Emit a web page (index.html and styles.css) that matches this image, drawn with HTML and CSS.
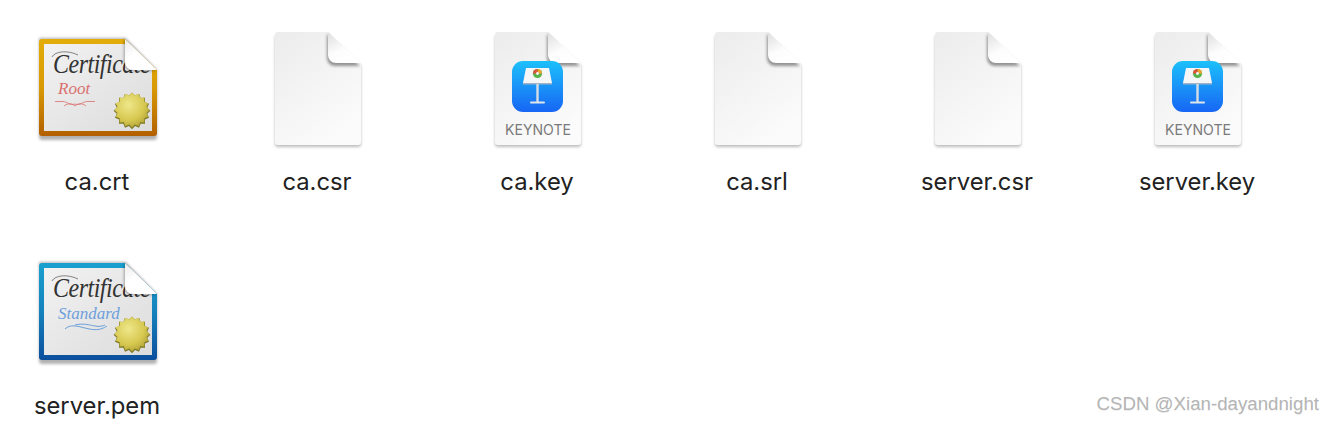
FILE: index.html
```html
<!DOCTYPE html>
<html lang="en">
<head>
<meta charset="utf-8">
<title>Certificates</title>
<link rel="stylesheet" href="styles.css">
</head>
<body>
<svg class="defs" aria-hidden="true">
  <defs>
    <linearGradient id="gold" x1="0" y1="0" x2="0" y2="1"><stop offset="0" stop-color="#e3ad0a"/><stop offset="0.5" stop-color="#d99a05"/><stop offset="1" stop-color="#b35f00"/></linearGradient>
    <linearGradient id="blue" x1="0" y1="0" x2="0" y2="1"><stop offset="0" stop-color="#1aa0cf"/><stop offset="0.5" stop-color="#1582bd"/><stop offset="1" stop-color="#0b4f9c"/></linearGradient>
    <linearGradient id="sheet" x1="0" y1="0" x2="1" y2="1"><stop offset="0" stop-color="#f2f2f2"/><stop offset="1" stop-color="#dcdcdc"/></linearGradient>
    <linearGradient id="page" x1="0" y1="0" x2="0.6" y2="1"><stop offset="0" stop-color="#ececec"/><stop offset="1" stop-color="#fbfbfb"/></linearGradient>
    <linearGradient id="fold" x1="0" y1="0" x2="0.6" y2="1"><stop offset="0" stop-color="#dedede"/><stop offset="0.6" stop-color="#fdfdfd"/><stop offset="1" stop-color="#ffffff"/></linearGradient>
    <linearGradient id="fold-cert" x1="0" y1="0" x2="0.6" y2="1"><stop offset="0" stop-color="#ebebeb"/><stop offset="0.5" stop-color="#ffffff"/><stop offset="1" stop-color="#ffffff"/></linearGradient>
    <linearGradient id="app" x1="0" y1="0" x2="0" y2="1"><stop offset="0" stop-color="#1cc0fb"/><stop offset="1" stop-color="#1766f4"/></linearGradient>
    <radialGradient id="seal" cx="0.4" cy="0.35" r="0.75"><stop offset="0" stop-color="#efe78a"/><stop offset="0.6" stop-color="#d6c850"/><stop offset="1" stop-color="#a69a30"/></radialGradient>
    <filter id="soft" x="-30%" y="-30%" width="160%" height="160%"><feGaussianBlur stdDeviation="1.800"/></filter>
    <clipPath id="sheet-clip"><path d="M7 14h81v26h27v61H7z"/></clipPath>
    <symbol id="blank" viewBox="0 0 120 120">
      <path d="M21 5h50l33 31v78a3 3 0 0 1-3 3H21a3 3 0 0 1-3-3V8a3 3 0 0 1 3-3z" fill="#000" opacity=".26" filter="url(#soft)"/>
      <path d="M21 2h50l33 31v79a3 3 0 0 1-3 3H21a3 3 0 0 1-3-3V5a3 3 0 0 1 3-3z" fill="url(#page)"/>
      <path d="M70 4v24a8 8 0 0 0 8 8h25z" fill="#000" opacity=".4" filter="url(#soft)"/>
      <path d="M71 2l33 31H79a8 8 0 0 1-8-8z" fill="url(#fold)"/>
    </symbol>
    <symbol id="keynote" viewBox="0 0 120 120">
      <use href="#blank" width="120" height="120"/>
      <rect x="35" y="31" width="51" height="51" rx="11" fill="url(#app)"/>
      <path d="M49 38h23l3 15H46z" fill="#f4f6f8"/>
      <rect x="46" y="53" width="29" height="1.500" fill="#9fb2c6"/>
      <rect x="59.300" y="54" width="2.400" height="18" fill="#d5dde6"/>
      <rect x="53" y="71.500" width="15" height="2" rx="1" fill="#dfe6ee"/>
      <circle cx="60.500" cy="43.500" r="4.600" fill="#58b44a"/>
      <path d="M60.500 43.500v-4.600a4.600 4.600 0 0 1 4.600 4.600z" fill="#f2a32d"/>
      <path d="M60.500 43.500h-4.600a4.600 4.600 0 0 1 4.600-4.600z" fill="#e0503f"/>
      <circle cx="60.500" cy="43.500" r="1.400" fill="#f4f6f8"/>
      <text class="kn-label" x="61" y="104.500" text-anchor="middle">KEYNOTE</text>
    </symbol>
    <polygon id="seal-shape" points="17.500,0 14.500,2.900 16.200,6.700 12.300,8.200 12.400,12.400 8.200,12.300 6.700,16.200 2.900,14.500 0,17.500 -2.900,14.500 -6.700,16.200 -8.200,12.300 -12.400,12.400 -12.300,8.200 -16.200,6.700 -14.500,2.900 -17.500,0 -14.500,-2.900 -16.200,-6.700 -12.300,-8.200 -12.400,-12.400 -8.200,-12.300 -6.700,-16.200 -2.900,-14.500 0,-17.500 2.900,-14.500 6.700,-16.200 8.200,-12.300 12.400,-12.400 12.300,-8.200 16.200,-6.700 14.500,-2.900"/>
  </defs>
</svg>

<main class="grid">
  <figure class="file">
    <svg class="icon" viewBox="0 0 120 120">
      <path d="M5 8h83l32 32v67a3 3 0 0 1-3 3H5a3 3 0 0 1-3-3V8z" fill="#000" opacity=".3" filter="url(#soft)"/>
      <path d="M5 9h83l32 31v63a3 3 0 0 1-3 3H5a3 3 0 0 1-3-3V12a3 3 0 0 1 3-3z" fill="url(#gold)"/>
      <path d="M7 14h86l22 22v65H7z" fill="url(#sheet)"/>
      <g clip-path="url(#sheet-clip)">
        <text class="script" transform="translate(16 43) scale(1 1.150)">Certificate</text>
        <path class="swash" d="M15 27c3-6 16-7 26-2"/>
      </g>
      <text class="script-sub root" x="21" y="64">Root</text>
      <path class="ornament-root" d="M18 71.500h8c4 0 7 4.500 12 2.500 5 2 8-2.500 12-2.500h8M27 76c4-3 8-3 11 0 3-3 7-3 11 0"/>
      <g transform="translate(95 80)">
        <use href="#seal-shape" fill="#7f7722" transform="translate(0 .8) scale(1.050)"/>
        <use href="#seal-shape" fill="url(#seal)"/>
      </g>
      <path d="M87 8v25a8 8 0 0 0 8 8h24z" fill="#000" opacity=".3" filter="url(#soft)"/>
      <path d="M88 9l32 31H96a8 8 0 0 1-8-8z" fill="url(#fold-cert)"/>
    </svg>
    <figcaption class="name">ca.crt</figcaption>
  </figure>
  <figure class="file">
    <svg class="icon"><use href="#blank"/></svg>
    <figcaption class="name">ca.csr</figcaption>
  </figure>
  <figure class="file">
    <svg class="icon"><use href="#keynote"/></svg>
    <figcaption class="name">ca.key</figcaption>
  </figure>
  <figure class="file">
    <svg class="icon"><use href="#blank"/></svg>
    <figcaption class="name">ca.srl</figcaption>
  </figure>
  <figure class="file">
    <svg class="icon"><use href="#blank"/></svg>
    <figcaption class="name">server.csr</figcaption>
  </figure>
  <figure class="file">
    <svg class="icon"><use href="#keynote"/></svg>
    <figcaption class="name">server.key</figcaption>
  </figure>
  <figure class="file">
    <svg class="icon" viewBox="0 0 120 120">
      <path d="M5 8h83l32 32v67a3 3 0 0 1-3 3H5a3 3 0 0 1-3-3V8z" fill="#000" opacity=".3" filter="url(#soft)"/>
      <path d="M5 9h83l32 31v63a3 3 0 0 1-3 3H5a3 3 0 0 1-3-3V12a3 3 0 0 1 3-3z" fill="url(#blue)"/>
      <path d="M7 14h86l22 22v65H7z" fill="url(#sheet)"/>
      <g clip-path="url(#sheet-clip)">
        <text class="script" transform="translate(16 43) scale(1 1.150)">Certificate</text>
        <path class="swash" d="M15 27c3-6 16-7 26-2"/>
      </g>
      <text class="script-sub standard" x="21" y="65">Standard</text>
      <path class="ornament-standard" d="M28 75c5-5 12-3 20-1 8 2 15 3 22-2M38 71c8-2 14 0 20 1 4 1 8 0 10-1"/>
      <g transform="translate(95 80)">
        <use href="#seal-shape" fill="#7f7722" transform="translate(0 .8) scale(1.050)"/>
        <use href="#seal-shape" fill="url(#seal)"/>
      </g>
      <path d="M87 8v25a8 8 0 0 0 8 8h24z" fill="#000" opacity=".3" filter="url(#soft)"/>
      <path d="M88 9l32 31H96a8 8 0 0 1-8-8z" fill="url(#fold-cert)"/>
    </svg>
    <figcaption class="name">server.pem</figcaption>
  </figure>
</main>
<div class="watermark">CSDN @Xian-dayandnight</div>
</body>
</html>
```
FILE: styles.css
```css
html, body {
  margin: 0;
  padding: 0;
  height: 424px;
  overflow: hidden;
  background: #fff;
}

body {
  position: relative;
  font-family: Inter, "Liberation Sans", sans-serif;
}

.defs {
  position: absolute;
  width: 0;
  height: 0;
}

.grid {
  display: grid;
  grid-template-columns: repeat(6, 180px);
  column-gap: 40px;
  row-gap: 36px;
  padding: 30px 0 0 7px;
}

.file {
  margin: 0;
  display: flex;
  flex-direction: column;
  align-items: center;
  height: 188px;
}

.icon {
  display: block;
  width: 120px;
  height: 120px;
  overflow: visible;
}

.name {
  margin-top: 18px;
  font-size: 23.800px;
  line-height: 28px;
  color: #222;
  white-space: nowrap;
}

.script {
  font-family: "Liberation Serif", serif;
  font-style: italic;
  font-size: 24px;
  letter-spacing: -0.500px;
  fill: #333;
}

.swash {
  fill: none;
  stroke: #555;
  stroke-width: 0.700;
}

.script-sub {
  font-family: "Liberation Serif", serif;
  font-style: italic;
}

.root {
  font-size: 17px;
  fill: #d9706e;
}

.standard {
  font-size: 17px;
  fill: #6d9fdb;
}

.ornament-root {
  fill: none;
  stroke: #d9706e;
  stroke-width: 0.800;
}

.ornament-standard {
  fill: none;
  stroke: #6d9fdb;
  stroke-width: 1;
}

.kn-label {
  font-family: Inter, "Liberation Sans", sans-serif;
  font-size: 14.100px;
  fill: #7a7a7a;
}

.watermark {
  position: absolute;
  right: 15px;
  top: 392px;
  font-family: "Liberation Sans", sans-serif;
  font-size: 18.700px;
  line-height: 24px;
  color: #b5b5b5;
  text-shadow: 0 1px 0 rgba(0, 0, 0, 0.08);
  white-space: nowrap;
}
```
